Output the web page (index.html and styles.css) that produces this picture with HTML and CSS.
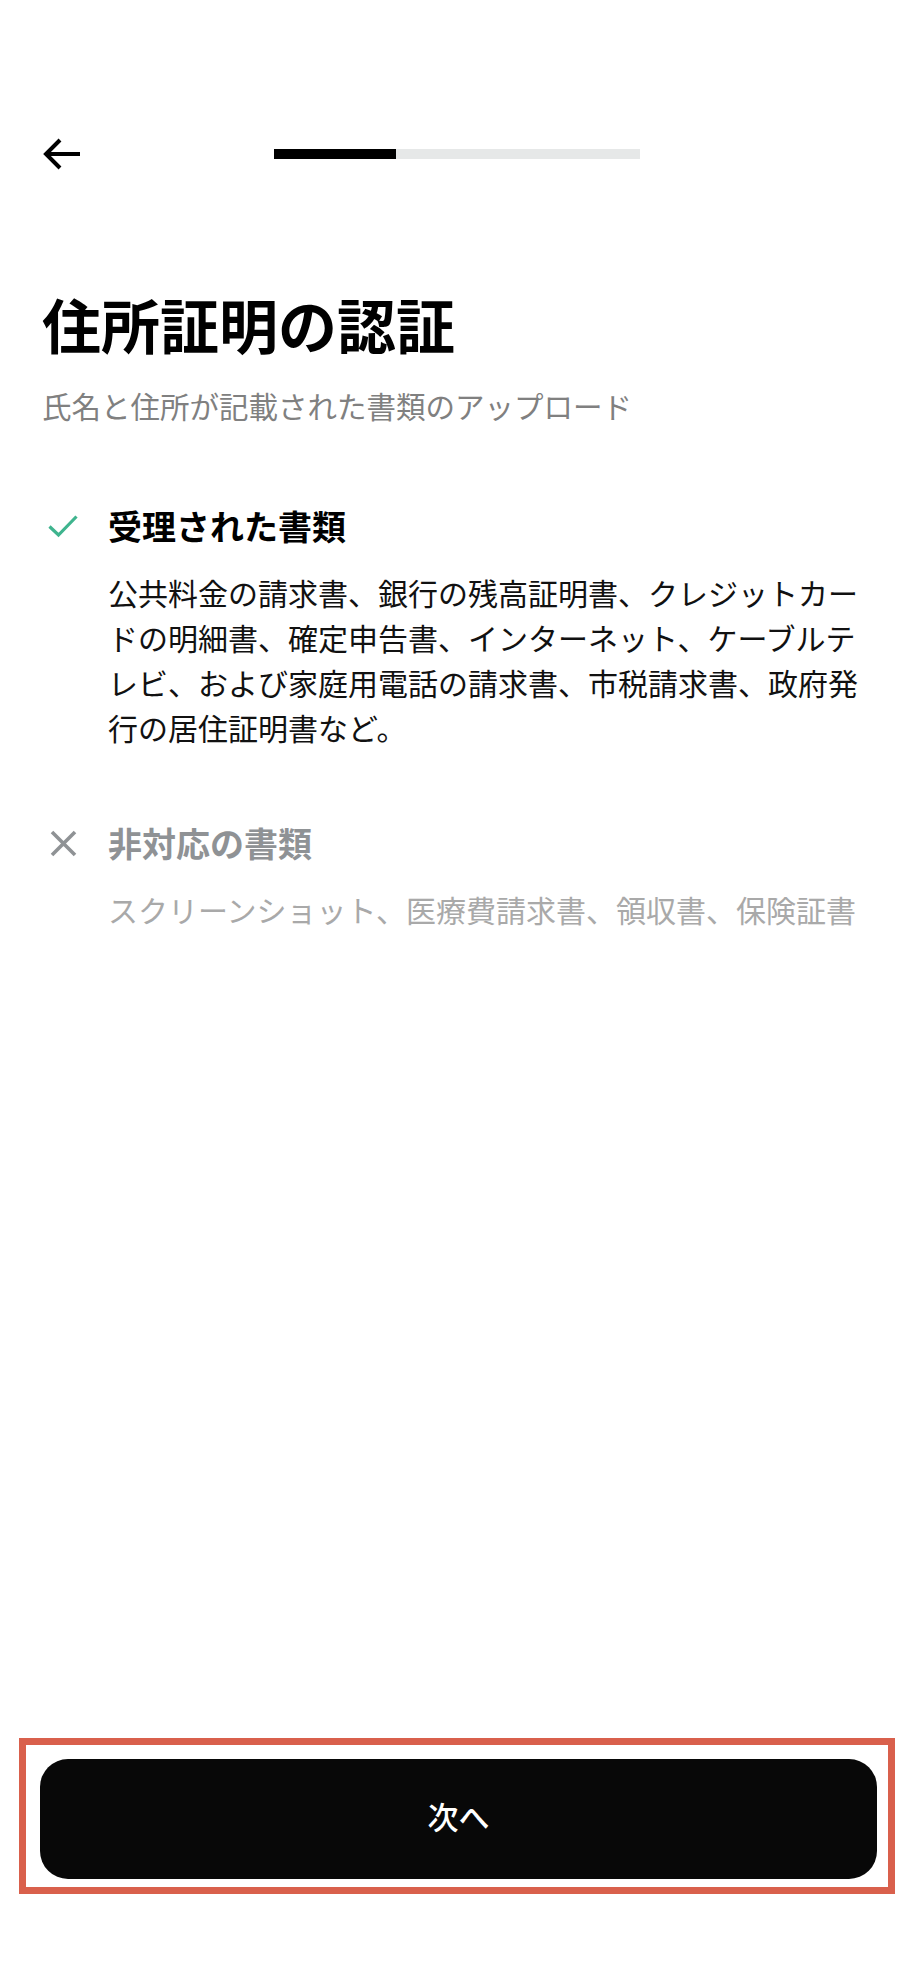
FILE: index.html
```html
<!DOCTYPE html>
<html lang="ja">
<head>
<meta charset="utf-8">
<title>住所証明の認証</title>
<link rel="stylesheet" href="styles.css">
</head>
<body>
<div class="page">
  <header class="topbar">
    <button class="back" aria-label="戻る">
      <svg width="38" height="32" viewBox="0 0 38 32" fill="none" stroke="#000" stroke-width="4" stroke-linejoin="miter">
        <path d="M38 16 H4"/>
        <path d="M18 2 L4 16 L18 30"/>
      </svg>
    </button>
    <div class="progress"><div class="progress-fill" style="width:33.3%"></div></div>
  </header>

  <h1 class="title">住所証明の認証</h1>
  <p class="subtitle">氏名と住所が記載された書類のアップロード</p>

  <section class="group accepted">
    <div class="group-head">
      <span class="icon">
        <svg width="30" height="24" viewBox="0 0 30 24" fill="none" stroke="#3fb48e" stroke-width="3.2" stroke-linecap="butt" stroke-linejoin="miter">
          <path d="M1.5 12.5 L10.5 21 L28.5 2.5"/>
        </svg>
      </span>
      <h2 class="group-title">受理された書類</h2>
    </div>
    <p class="group-body">公共料金の請求書、銀行の残高証明書、クレジットカードの明細書、確定申告書、インターネット、ケーブルテレビ、および家庭用電話の請求書、市税請求書、政府発行の居住証明書など。</p>
  </section>

  <section class="group rejected">
    <div class="group-head">
      <span class="icon">
        <svg width="27" height="27" viewBox="0 0 27 27" fill="none" stroke="#8f9295" stroke-width="3.6">
          <path d="M2 2 L25 25 M25 2 L2 25"/>
        </svg>
      </span>
      <h2 class="group-title">非対応の書類</h2>
    </div>
    <p class="group-body">スクリーンショット、医療費請求書、領収書、保険証書</p>
  </section>

  <footer class="footer">
    <div class="highlight">
      <button class="next">次へ</button>
    </div>
  </footer>
</div>
</body>
</html>
```

FILE: styles.css
```css
* { box-sizing: border-box; }

html, body {
  margin: 0;
  padding: 0;
  background: #fff;
}

body {
  font-family: "Noto Sans CJK JP", "Noto Sans", sans-serif;
  color: #111;
}

.page {
  display: flex;
  flex-direction: column;
  min-height: 1978px;
  padding: 130px 42px 84px;
}

.topbar {
  position: relative;
  height: 48px;
  display: flex;
  align-items: center;
}

.back {
  border: 0;
  background: none;
  padding: 0;
  margin: 0;
  width: 38px;
  height: 32px;
  display: flex;
}

.progress {
  position: absolute;
  left: 50%;
  top: 19px;
  margin-left: -183px;
  width: 366px;
  height: 10px;
  background: #e6e8e8;
}

.progress-fill {
  height: 100%;
  background: #000;
}

.title {
  margin: 111px 0 0;
  font-size: 59px;
  line-height: 70px;
  font-weight: 700;
  color: #000;
  letter-spacing: 0;
}

.subtitle {
  margin: 26px 0 0;
  font-size: 29.5px;
  line-height: 40px;
  color: #808080;
  font-weight: 400;
}

.group {
  display: flex;
  flex-direction: column;
}

.accepted { margin-top: 79px; }
.rejected { margin-top: 71px; }

.group-head {
  display: flex;
  align-items: center;
  gap: 24px;
  height: 44px;
}

.icon {
  width: 42px;
  display: flex;
  justify-content: center;
  align-items: center;
}

.group-title {
  margin: 0;
  font-size: 34px;
  line-height: 44px;
  font-weight: 700;
  color: #000;
}

.group-body {
  margin: 22px 0 0 66px;
  font-size: 30px;
  line-height: 45px;
  color: #111;
}

.rejected .group-title { color: #8f9295; }
.rejected .group-body { color: #a9a9a9; }

.footer {
  margin-top: auto;
  margin-left: -23px;
  margin-right: -23px;
}

.highlight {
  width: 876px;
  border: 7px solid #d9604c;
  padding: 14px 11px 8px 14px;
}

.next {
  display: block;
  width: 100%;
  height: 120px;
  padding: 0 0 8px;
  border: 0;
  border-radius: 28px;
  background: #080808;
  color: #fff;
  font-family: "Noto Sans CJK JP", "Noto Sans", sans-serif;
  font-size: 31px;
  font-weight: 500;
}
```
